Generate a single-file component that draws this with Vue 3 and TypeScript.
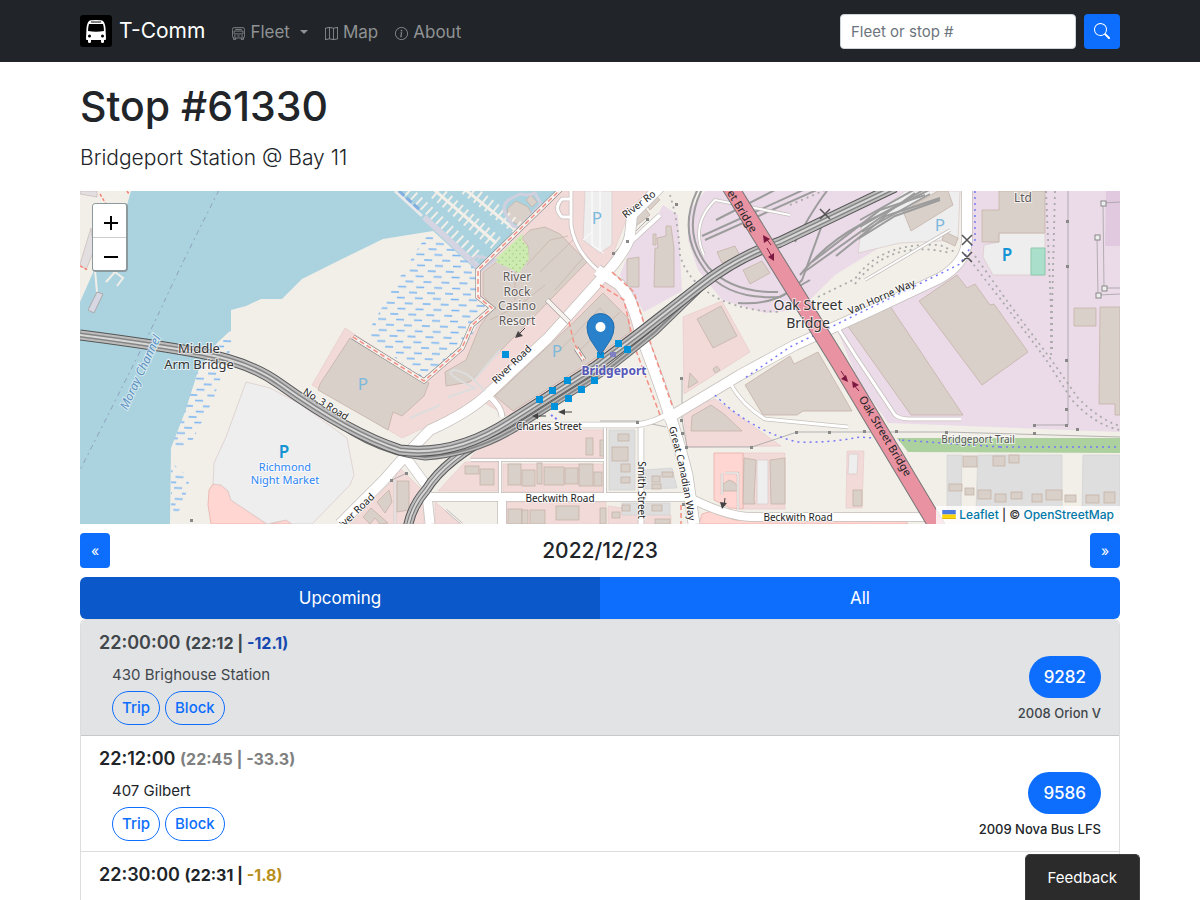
<script setup lang="ts">
import { ref } from 'vue'

interface Departure {
  time: string
  expected: string
  delay: string
  tone: 'early' | 'muted' | 'late'
  route: string
  vehicle?: string
  model?: string
  past?: boolean
}

const departures: Departure[] = [
  { time: '22:00:00', expected: '22:12', delay: '-12.1', tone: 'early', route: '430 Brighouse Station', vehicle: '9282', model: '2008 Orion V', past: true },
  { time: '22:12:00', expected: '22:45', delay: '-33.3', tone: 'muted', route: '407 Gilbert', vehicle: '9586', model: '2009 Nova Bus LFS' },
  { time: '22:30:00', expected: '22:31', delay: '-1.8', tone: 'late', route: '430 Brighouse Station' },
]

const query = ref('')
const view = ref<'upcoming' | 'all'>('upcoming')

// Map features, in map canvas units
const industrial = [
  '663,205 678,215 682,291 644,312 620,275 632,245 655,220',
  '705,191 905,191 900,235 835,275 800,310 765,313 722,300 698,270 688,240 690,210',
  '835,325 960,264 972,240 971,191 1120,191 1120,432 888,423 858,380',
]
const commercial = [
  '345,328 424,380 465,347 478,325 490,308 478,297 478,270 560,191 660,191 628,215 605,275 625,290 645,340 600,365 510,418 480,400 430,425 402,438 312,385',
  '470,458 497,430 603,430 603,458',
  '438,491 465,462 498,462 498,491',
  '503,464 603,464 603,492 503,492',
  '506,502 606,502 606,524 506,524',
  '435,502 462,524 435,524',
  '399,467 424,492 424,524 350,524 395,478',
  '683,317 722,301 750,352 684,394',
  '683,410 715,399 781,446 687,447',
  '743,453 785,453 785,509 743,509',
  '847,451 864,451 862,508 846,508',
  '608,506 671,515 671,524 608,524',
]
const retail = [
  '213,484 221,485 228,491 231,500 267,524 211,524 208,505 209,490',
  '714,453 743,453 743,509 730,508 714,500',
  '699,524 702,514 712,511 735,520 905,521 908,524',
  '270,524 286,520 292,524',
]
const paved = [
  '246,382 226,437 214,463 213,484 221,485 228,491 231,500 267,524 286,520 292,524 312,524 350,485 354,475 347,438 300,404 270,388',
  '585,191 612,191 612,245 600,253 583,240',
  '858,253 862,225 905,191 960,191 958,240 900,243',
  '999,242 999,233 1045,233 1045,275 993,275 983,257 984,245',
  '757,460 768,460 768,504 757,504',
  '849,454 858,454 857,474 848,474',
]
const residential = [
  '609,430 635,430 635,490 609,490',
  '645,470 672,468 677,488 645,489',
  '622,503 670,503 670,515 622,515',
  '947,455 962,455 961,510 947,510',
  '978,455 1062,455 1062,510 976,510',
  '1083,455 1120,455 1120,510 1082,510',
]
const buildings = [
  '483,272 498,261 519,272 529,259 528,246 522,238 530,230 545,227 560,234 587,262 516,335 470,382 446,386 445,372 466,360 480,326 493,308 483,295',
  '350,338 429,383 424,396 402,416 393,412 388,430 318,390 320,384',
  '495,396 578,318 603,293 628,318 630,332 590,362 513,411',
  '508,208 516,201 528,207 533,216 520,226 506,218',
  '526,200 531,195 537,202 532,207',
  '630,222 644,207 650,215 636,226',
  '647,205 655,195 660,200 650,210',
  '627,259 639,257 639,287 627,287',
  '655,248 658,248 657,238 666,236 666,226 671,226 674,248 674,287 654,287',
  '653,234 656,234 656,245 653,245',
  '717,252 735,246 740,256 722,263',
  '743,270 762,261 770,273 750,284',
  '697,319 721,306 737,336 713,348',
  '745,385 790,356 794,364 818,352 852,411 803,411 797,415 763,415',
  '692,416 711,405 724,414 742,431 691,431',
  '688,388 690,373 698,382',
  '713,369 717,366 720,370 715,373',
  '847,325 890,306 963,415 911,415',
  '919,301 957,275 967,288 975,284 990,305 994,304 1028,352 982,385',
  '999,191 1045,191 1045,233 999,233 999,242 982,242 982,210 999,210',
  '1074,308 1096,308 1096,326 1074,326',
  '1100,307 1120,307 1120,415 1115,415 1115,404 1099,404',
  '903,211 938,191 948,191 953,205 911,231',
  '942,240 945,232 958,238 955,246',
  '744,458 756,460 754,500 755,504 743,504',
  '770,460 785,458 785,504 771,504',
  '723,484 729,480 734,482 738,487 738,491 723,491',
  '397,481 409,481 409,510 397,512',
  '377,502 389,490 392,502 385,513',
  '363,517 371,508 388,523 380,524 375,518 370,524',
]
const houses = [
  [612, 447, 16, 14], [618, 434, 11, 7], [621, 464, 9, 8], [621, 477, 9, 6], [652, 476, 8, 6], [662, 472, 11, 5], [652, 484, 9, 5],
  [622, 505, 8, 6], [652, 505, 10, 6], [612, 512, 8, 6], [655, 519, 15, 5], [600, 440, 4, 16], [600, 508, 6, 16],
  [853, 490, 9, 16], [465, 466, 14, 8], [480, 469, 14, 16], [508, 464, 13, 21], [522, 470, 13, 16], [537, 463, 5, 21], [544, 467, 20, 18],
  [565, 468, 13, 16], [579, 464, 14, 22], [594, 472, 8, 14], [586, 438, 7, 17], [508, 509, 14, 15], [522, 510, 6, 14],
  [530, 510, 15, 14], [556, 506, 23, 14], [963, 456, 14, 11], [993, 456, 12, 10], [1009, 455, 10, 8], [949, 484, 13, 7], [965, 488, 9, 7],
  [978, 490, 13, 9], [995, 494, 11, 8], [1011, 492, 11, 7], [1032, 494, 10, 8], [1046, 490, 16, 10], [1065, 495, 11, 7], [1086, 495, 13, 8], [1104, 492, 11, 11],
]
const roads = [
  { d: 'M340 524L384 480Q410 450 430 430Q470 412 489 393L548 338L600 280Q628 250 630 235L632 215L662 185', w: 10 },
  { d: 'M597 270L620 285Q634 302 641 335L655 372Q676 430 687 475L694 524', w: 11 },
  { d: 'M665 420L740 375L795 345L870 311L940 278Q966 263 967 240V185', w: 10 },
  { d: 'M520 425H635Q655 423 670 412', w: 5 },
  { d: 'M424 497H688Q725 516 750 517H940', w: 8 },
  { d: 'M404 455L426 485L430 524', w: 9 },
  { d: 'M502 498V524', w: 8 },
  { d: 'M641 428V524', w: 5 },
  { d: 'M605 428V494M471 460H605M500 461V494', w: 2 },
  { d: 'M488 395Q502 407 502 417', w: 5 },
  { d: 'M622 250L660 215', w: 4 },
  { d: 'M571 191V225Q575 252 600 272M571 199H562Q553 208 562 217H571', w: 3 },
  { d: 'M730 383Q742 405 765 419L848 427', w: 3 },
  { d: 'M836 325L855 355L895 415Q900 419 910 419H961', w: 3 },
  { d: 'M395 480V524M446 510L462 524M725 473H738V510M722 473V495', w: 1 },
  { d: 'M704 255Q690 225 715 200L790 215M865 280L950 230', w: 2 },
]
const mainLine = 'M80 335Q150 344 200 353T280 384Q350 434 400 450Q455 457 510 421L595 367L640 333L700 286Q735 258 780 242L895 187'
const sideLine = 'M310 400Q365 451 425 457Q480 453 525 422L610 368L655 332Q685 303 715 274'
const branchLine = 'M500 431Q445 459 426 490Q412 506 408 526'
const sidings = [
  'M700 185Q675 230 705 270Q728 300 780 297L810 280',
  'M703 187Q680 232 709 268Q733 293 778 292',
  'M738 303Q780 306 802 280L822 225',
  'M716 220L775 190M702 236L812 186M705 240L830 184',
  'M795 242Q815 206 827 191M800 275Q826 243 860 225L935 187',
  'M804 272L915 193M812 262L880 210L925 195M836 256L886 216L940 198M858 239L895 216L940 200',
  'M860 220L919 187M860 227L925 189M862 232L930 194',
]
const footpaths = [
  'M670 195Q678 220 680 255Q685 275 705 290Q730 310 780 312',
  'M818 297L855 279Q880 242 940 245L955 252M855 284Q890 238 950 253',
  'M1046 191L1051 310V355M1055 191L1052 310V350',
  'M970 260L1005 305L1045 358L1072 400Q1095 425 1120 430M975 256L1010 305L1050 358L1078 398Q1100 420 1120 426',
  'M963 195V240M790 205L830 188',
]
const cycleStops = [[505, 354], [618, 343], [627, 349], [594, 380], [581, 389], [567, 380], [552, 390], [539, 399], [568, 398], [554, 406]]
const poles = [[648, 219], [628, 241], [614, 253], [677, 204], [682, 378], [682, 420], [683, 433], [687, 447], [752, 447], [797, 432], [830, 432], [865, 431], [897, 431], [947, 432], [1035, 425], [1035, 433], [1067, 360], [1067, 409], [1067, 425], [1078, 429], [392, 480], [407, 473], [638, 422], [1068, 221], [1068, 266], [192, 520], [684, 504]]
const towers = [[1103, 203], [1097, 237], [1104, 288], [1098, 295]]
</script>

<template>
  <header class="navbar">
    <a class="brand" href="#">
      <svg class="logo" viewBox="0 0 32 32" aria-hidden="true">
        <rect width="32" height="32" rx="3" fill="#000" />
        <path fill="#fff" d="M9 6Q10 5 16 5T23 6Q25 8 25.500 13L26 24Q26 25 25 25H24V27Q24 28 22.500 28T21 27V25H11V27Q11 28 9.500 28T8 27V25H7Q6 25 6 24L6.500 13Q7 8 9 6Z" />
        <path fill="#000" d="M11 6.500H21V7.500H11ZM9 9H23Q24 12 24 16Q16 17.500 8 16Q8 12 9 9Z" />
        <circle cx="9.500" cy="21" r="1.500" /><circle cx="22.500" cy="21" r="1.500" />
      </svg>
      T-Comm
    </a>
    <nav class="links">
      <a class="fleet" href="#">
        <svg class="icon" viewBox="0 0 16 16" aria-hidden="true">
          <path d="M2.500 .8H13.500Q15.500 .8 15.500 3V11.500Q15.500 13.500 13.500 13.500H2.500Q.5 13.500 .5 11.500V3Q.5 .8 2.500 .8ZM4 3H12M2.500 5H13.500V8.500H2.500ZM6.500 11H9.500M2 13V15.500H4.500V13.500M11.500 13.500V15.500H14V13" fill="none" stroke="currentColor" />
          <circle cx="3.500" cy="11" r="1" /><circle cx="12.500" cy="11" r="1" />
        </svg>
        Fleet
      </a>
      <a href="#">
        <svg class="icon" viewBox="0 0 16 16" aria-hidden="true">
          <path fill-rule="evenodd" d="M15.817.113A.5.5 0 0 1 16 .5v14a.5.5 0 0 1-.402.49l-5 1a.502.502 0 0 1-.196 0L5.500 15.010l-4.902.98A.5.5 0 0 1 0 15.500v-14a.5.5 0 0 1 .402-.49l5-1a.5.5 0 0 1 .196 0L10.500.99l4.902-.98a.5.5 0 0 1 .415.103zM10 1.910l-4-.8v12.980l4 .8V1.910zm1 12.980 4-.8V1.110l-4 .8v12.980zm-6-.8V1.110l-4 .8v12.980l4-.8z" />
        </svg>
        Map
      </a>
      <a href="#">
        <svg class="icon" viewBox="0 0 16 16" aria-hidden="true">
          <path d="M8 15A7 7 0 1 1 8 1a7 7 0 0 1 0 14zm0 1A8 8 0 1 0 8 0a8 8 0 0 0 0 16z" />
          <path d="m8.930 6.588-2.290.287-.082.380.450.083c.294.070.352.176.288.469l-.738 3.468c-.194.897.105 1.319.808 1.319.545 0 1.178-.252 1.465-.598l.088-.416c-.2.176-.492.246-.686.246-.275 0-.375-.193-.304-.533L8.930 6.588zM9 4.500a1 1 0 1 1-2 0 1 1 0 0 1 2 0z" />
        </svg>
        About
      </a>
    </nav>
    <form class="search" @submit.prevent>
      <input v-model="query" type="search" placeholder="Fleet or stop #" aria-label="Fleet or stop #" />
      <button type="submit" aria-label="Search">
        <svg viewBox="0 0 16 16" aria-hidden="true">
          <path d="M11.742 10.344a6.500 6.500 0 1 0-1.397 1.398h-.001c.030.040.062.078.098.115l3.850 3.850a1 1 0 0 0 1.415-1.414l-3.850-3.850a1.007 1.007 0 0 0-.115-.1zM12 6.500a5.500 5.500 0 1 1-11 0 5.500 5.500 0 0 1 11 0z" />
        </svg>
      </button>
    </form>
  </header>

  <main>
    <h1>Stop #61330</h1>
    <p class="lead">Bridgeport Station @ Bay 11</p>

    <section class="map" aria-label="Stop map">
      <svg class="canvas" viewBox="80 191 1040 333" preserveAspectRatio="xMidYMid slice">
        <defs>
          <pattern id="marsh" width="18" height="22" patternUnits="userSpaceOnUse" patternTransform="rotate(2)">
            <path d="M1 3H9M12 8.500H18M0 8.500H2M5 14H13M11 19.500H18M0 19.500H1" stroke="#78b4f2" stroke-width="1.700" fill="none" />
          </pattern>
          <pattern id="grass" width="7" height="7" patternUnits="userSpaceOnUse">
            <rect width="7" height="7" fill="#cdebb0" /><circle cx="2" cy="2" r=".7" fill="#95c477" /><circle cx="5.500" cy="5.500" r=".7" fill="#95c477" />
          </pattern>
          <path id="gcw" d="M668 425Q681 468 689 524" />
        </defs>
        <rect x="80" y="191" width="1040" height="333" fill="#f2efe9" />
        <path fill="#aad3df" d="M131 191H566L478 272L433 231L383 239L340 260L302 279L282 299H261L246 306L231 310V330L217 343L198 371L185 412L171 448L170 524H80V302L95 268L110 250L127 205Z" />
        <path fill="url(#marsh)" d="M431 232L483 272V296L493 308L470 350L424 380L366 335L395 285L420 245ZM231 330V348L213 400L190 445L171 447L185 411L198 371L217 343ZM171 462L190 478L183 505L171 522Z" />

        <g fill="#ebdbe8"><polygon v-for="p in industrial" :key="p" :points="p" /></g>
        <g fill="#f2dad9" stroke="#e6c8c6" stroke-width=".6"><polygon v-for="p in commercial" :key="p" :points="p" /></g>
        <g fill="#ffd6d1" stroke="#e6aaa4" stroke-width=".7"><polygon v-for="p in retail" :key="p" :points="p" /></g>
        <g fill="#eee" stroke="#d8c8c8" stroke-width=".7"><polygon v-for="p in paved" :key="p" :points="p" /></g>
        <g fill="#dedede" stroke="#ccc" stroke-width=".6"><polygon v-for="p in residential" :key="p" :points="p" /></g>
        <path fill="#add19e" d="M897 438H1120V453L908 452Z" />
        <path fill="#aae0cb" stroke="#8ec7ae" d="M1031 248H1045V275H1031Z" />
        <path fill="#e1c9df" d="M1106 191H1120V246H1105Z" />
        <g fill="#d9d0c9" stroke="#c5b3a8" stroke-width=".8">
          <polygon v-for="p in buildings" :key="p" :points="p" />
          <rect v-for="(h, i) in houses" :key="i" :x="h[0]" :y="h[1]" :width="h[2]" :height="h[3]" />
        </g>
        <path fill="none" stroke="#c5b3a8" stroke-width=".7" d="M527 265L550 240L568 236M540 272L575 238M555 290L583 258M490 320L520 305L545 285M560 350L600 308L615 325M580 350L620 312M515 272V300" />
        <path fill="url(#grass)" d="M493 261L523 233L522 240L528 247L529 259L519 273L505 266Z" />

        <!-- marina -->
        <g fill="none" stroke="#f2efe9">
          <path d="M432 188L496 243M462 187L518 232" stroke-width="3" />
          <path d="M436 192L496 243" stroke-width="15" stroke-dasharray="2 5" />
          <path d="M466 188L518 228" stroke-width="14" stroke-dasharray="2 5" />
          <path d="M408 191L480 258" stroke-width="10" stroke-dasharray="2 5" />
        </g>
        <path d="M424 217L478 267" fill="none" stroke="#d4d4e2" stroke-width="6" />
        <path d="M395 191L422 216" fill="none" stroke="#e9e8ea" stroke-width="3" />
        <path d="M399 191L421 211" fill="none" stroke="#82aee0" stroke-width="3" stroke-dasharray="7 3" />
        <path d="M471 260L477 256L495 260L478 272ZM513 226L506 215Q500 204 512 198L520 194L528 195L535 193L541 204L520 228Z" fill="none" stroke="#d0d0df" stroke-width="3" />
        <path d="M95 270L97 292M106 282L115 272L123 278L117 286M112 270L115 273" fill="none" stroke="#f2efe9" stroke-width="2" />
        <path d="M97 292L103 294L94 313L88 310Z" fill="#d8d8e4" stroke="#aaa" />
        <path d="M80 191H97V197L80 194ZM91 228L80 264L86 270L94 250Z" fill="#e3dfe0" stroke="#c5b8b8" stroke-width=".7" />
        <path d="M100 194L106 204M127 191L129 194M80 266L88 270" stroke="#fa8072" stroke-width="1.500" stroke-dasharray="3 2" fill="none" />
        <path d="M219 190Q180 267 165 300T80 470" fill="none" stroke="#8f9fbd" stroke-width="1" stroke-dasharray="5 4 2 4" />

        <!-- rail yard and service lines -->
        <g fill="none" stroke="#9c9c9c" stroke-width="2"><path v-for="s in sidings" :key="s" :d="s" /></g>
        <g fill="none" stroke="#aaa" stroke-width="1.800" stroke-dasharray="2 4"><path v-for="f in footpaths" :key="f" :d="f" /></g>
        <path d="M1068 191V425H1035M1103 203L1104 288H1120M1097 237L1098 295L1120 294M1103 203L1120 202M682 378V420L687 447H752L797 432H897L947 432L1120 437M600 421H638L666 427M392 480L407 473M614 253L648 219" fill="none" stroke="#999" stroke-width=".7" />

        <!-- streets -->
        <g fill="none" stroke="#c6c0bd" stroke-linejoin="round"><path v-for="r in roads" :key="r.d" :d="r.d" :stroke-width="r.w + 1.5" /></g>
        <g fill="none" stroke="#fff" stroke-linejoin="round"><path v-for="r in roads" :key="r.d" :d="r.d" :stroke-width="r.w" /></g>
        <path d="M592 191V245L604 253M600 191V250M583 240L592 232" fill="none" stroke="#fff" stroke-width="1" />
        <path d="M448 397L475 388Q440 372 455 370Q465 372 474 380L485 391M474 380L500 350M410 418L440 405" fill="none" stroke="#ddd" stroke-width="2" />
        <g fill="none" stroke="#777" stroke-width="5"><path d="M353 337L424 381L462 348L472 325L492 308L478 297V270L562 188" /><path d="M547 300L569 322" /><path d="M576 348L584 360" /></g>
        <g fill="none" stroke="#f8f2ef" stroke-width="4"><path d="M353 337L424 381L462 348L472 325L492 308L478 297V270L562 188" /><path d="M547 300L569 322" /><path d="M576 348L584 360" /></g>
        <g fill="none" stroke="#f58f83" stroke-width="1.500" stroke-dasharray="5 3">
          <path d="M353 337L424 381L462 348L472 325L492 308L478 297V270L562 188M569 322L574 343L584 360M612 272L634 292L646 330L672 405M600 285L624 300L634 345L660 415M681 505V524" />
        </g>
        <path d="M1000 447L900 440M715 395Q750 430 797 442Q830 443 860 437L900 440M1000 447H1120M975 191V240L960 264L790 347L745 378" fill="none" stroke="#7777f8" stroke-width="1.500" stroke-dasharray="2 4" />

        <!-- elevated railway -->
        <g fill="none">
          <path :d="branchLine" stroke="#555" stroke-width="10" /><path :d="branchLine" stroke="#bdbdbd" stroke-width="8" /><path :d="branchLine" stroke="#777" stroke-width="4" /><path :d="branchLine" stroke="#d5d5d5" stroke-width="2" />
          <path :d="sideLine" stroke="#666" stroke-width="7" /><path :d="sideLine" stroke="#bbb" stroke-width="5" /><path :d="sideLine" stroke="#888" stroke-width="2" />
          <path :d="mainLine" stroke="#555" stroke-width="11" /><path :d="mainLine" stroke="#bdbdbd" stroke-width="9" /><path :d="mainLine" stroke="#858585" stroke-width="5" /><path :d="mainLine" stroke="#d8d8d8" stroke-width="2" />
        </g>
        <path d="M729 185L838 361L938 528" fill="none" stroke="#777" stroke-width="17" />
        <path d="M729 185L838 361L938 528" fill="none" stroke="#e892a2" stroke-width="15" />
        <g stroke="#7d1840" fill="#7d1840"><path d="M771 245L765 237M767 248L772 257M841 371L847 380M859 391L853 384" /><path stroke="none" d="M763 235L770 239L764 243ZM774 261L768 257L774 253ZM848 382L841 379L846 375ZM852 381L859 385L853 388Z" /></g>
        <g stroke="#444" fill="#444"><path d="M525 328L518 335M546 416H534M572 412H560M725 498L724 506" /><path stroke="none" d="M515 338L518 331L523 336ZM532 416L538 413V419ZM558 412L565 409V415ZM722 509L720 502L727 503Z" /></g>
        <path d="M820 209L830 219M830 209L820 219M962 235L972 245M972 235L962 245M962 252L972 262M972 252L962 262" stroke="#555" stroke-width="1.500" />
        <path d="M551 415L558 420" stroke="#7777f8" stroke-width="2" stroke-dasharray="2 3" />
        <g fill="#888"><rect v-for="(p, i) in poles" :key="i" :x="p[0] - 2" :y="p[1] - 1" width="3" height="3" /></g>
        <g fill="#eee" stroke="#888"><rect v-for="(p, i) in towers" :key="i" :x="p[0] - 2" :y="p[1] - 2" width="5" height="5" /></g>
        <g fill="#0092da"><rect v-for="(s, i) in cycleStops" :key="i" :x="s[0] - 3" :y="s[1] - 3" width="7" height="7" /><path d="M597 352H604V358H597Z" /></g>
        <path d="M610 352H616V357H610Z" fill="#7f7fc4" />

        <g class="parking"><text x="284" y="458" class="strong">P</text><text x="363" y="390">P</text><text x="557" y="357">P</text><text x="597" y="224">P</text><text x="940" y="231">P</text><text x="1007" y="261" class="strong">P</text></g>
        <g class="place">
          <text x="199" y="353">Middle</text><text x="199" y="369">Arm Bridge</text>
        </g>
        <g class="place large"><text x="808" y="310">Oak Street</text><text x="808" y="328">Bridge</text></g>
        <g class="place soft"><text x="517" y="281">River</text><text x="517" y="296">Rock</text><text x="517" y="310">Casino</text><text x="517" y="325">Resort</text><text x="1023" y="202">Ltd</text></g>
        <g class="place market"><text x="285" y="471">Richmond</text><text x="285" y="484">Night Market</text></g>
        <text class="place station" x="614" y="375">Bridgeport</text>
        <g class="street">
          <text transform="translate(324 407) rotate(32)">No. 3 Road</text>
          <text transform="translate(514 367) rotate(-44)">River Road</text>
          <text transform="translate(357 515) rotate(-44)">River Road</text>
          <text transform="translate(641 207) rotate(-37)">River Ro</text>
          <text x="549" y="430">Charles Street</text><text x="560" y="502">Beckwith Road</text><text x="798" y="521">Beckwith Road</text>
          <text transform="translate(638 490) rotate(90)">Smith Street</text>
          <text><textPath href="#gcw" startOffset="50%">Great Canadian Way</textPath></text>
          <text transform="translate(883 300) rotate(-24)">Van Horne Way</text>
          <text x="978" y="443" class="trail">Bridgeport Trail</text>
          <text class="trunk" transform="translate(882 438) rotate(59)">Oak Street Bridge</text>
          <text class="trunk" transform="translate(739 213) rotate(59)">et Bridge</text>
        </g>
        <text class="river" transform="translate(144 374) rotate(-65)">Moray Channel</text>

        <!-- stop marker -->
        <path d="M600.500 355L590 339Q587 333 587 327A13.500 13.500 0 0 1 614 327Q614 333 611 339Z" fill="#2a81cb" stroke="#1f6bac" />
        <circle cx="600.500" cy="327" r="5" fill="#fff" />
      </svg>

      <div class="zoom">
        <button type="button" aria-label="Zoom in"><svg viewBox="0 0 16 16"><path d="M1 8H15M8 1V15" /></svg></button>
        <button type="button" aria-label="Zoom out"><svg viewBox="0 0 16 16"><path d="M1 8H15" /></svg></button>
      </div>
      <div class="credit">
        <a href="#"><svg class="flag" viewBox="0 0 12 8" aria-hidden="true"><path fill="#4C7BE1" d="M0 0h12v4H0z" /><path fill="#FFD500" d="M0 4h12v3H0z" /><path fill="#E0BC00" d="M0 7h12v1H0z" /></svg> Leaflet</a> | © <a href="#">OpenStreetMap</a>
      </div>
    </section>

    <div class="day">
      <button type="button" aria-label="Previous day">«</button>
      <h2>2022/12/23</h2>
      <button type="button" aria-label="Next day">»</button>
    </div>

    <div class="tabs" role="group">
      <button type="button" :class="{ active: view === 'upcoming' }" @click="view = 'upcoming'">Upcoming</button>
      <button type="button" :class="{ active: view === 'all' }" @click="view = 'all'">All</button>
    </div>

    <ul class="list">
      <li v-for="d in departures" :key="d.time" :class="{ past: d.past }">
        <div>
          <h3 :class="d.tone">{{ d.time }} <small>({{ d.expected }} | <span>{{ d.delay }})</span></small></h3>
          <div class="detail">
            <p>{{ d.route }}</p>
            <div class="actions">
              <a href="#">Trip</a>
              <a href="#">Block</a>
            </div>
          </div>
        </div>
        <div v-if="d.vehicle" class="bus">
          <a href="#">{{ d.vehicle }}</a>
          <small>{{ d.model }}</small>
        </div>
      </li>
    </ul>
  </main>

  <button class="feedback" type="button">Feedback</button>
</template>

<style>
body {
  margin: 0;
  background: #fff;
}
</style>

<style scoped>
.navbar,
main,
.feedback {
  font-family: Inter, "Liberation Sans", sans-serif;
  font-size: 15px;
  line-height: 22px;
  color: #212529;
}
.navbar,
.navbar *,
main * {
  box-sizing: border-box;
}
button,
input {
  font: inherit;
}
button {
  cursor: pointer;
}
a {
  text-decoration: none;
}
.navbar {
  display: flex;
  align-items: center;
  height: 62px;
  padding: 0 80px;
  background: #212529;
}
.brand {
  display: flex;
  align-items: center;
  gap: 7px;
  color: #fff;
  font-size: 21px;
  line-height: 32px;
}
.logo {
  width: 32px;
  height: 32px;
}
.links {
  display: flex;
  gap: 17px;
  margin-left: 27px;
  padding-top: 2px;
}
.links a {
  display: flex;
  align-items: center;
  gap: 5px;
  color: #909294;
  font-size: 17px;
  line-height: 24px;
}
.icon {
  width: 13px;
  height: 13px;
  margin-top: 2px;
  fill: currentColor;
}
.fleet::after {
  content: "";
  margin-left: 5px;
  border: 4px solid transparent;
  border-top-color: currentColor;
  border-bottom: 0;
}
.search {
  display: flex;
  gap: 8px;
  margin-left: auto;
}
.search input {
  width: 236px;
  height: 35px;
  padding: 0 10px;
  border: 1px solid #ced4da;
  border-radius: 4px;
  outline: 0;
  background: #fff;
}
.search input::placeholder {
  color: #6c757d;
  opacity: 1;
}
.search button {
  display: grid;
  place-items: center;
  width: 36px;
  height: 35px;
  padding: 0;
  border: 0;
  border-radius: 4px;
  background: #0d6efd;
}
.search svg {
  width: 16px;
  height: 16px;
  fill: #fff;
}
main {
  padding: 18px 80px 0;
}
h1 {
  margin: 0;
  font-size: 41px;
  font-weight: 500;
  line-height: 52px;
}
.lead {
  margin: 10px 0 18px;
  font-size: 21px;
  font-weight: 300;
  line-height: 31px;
}
.map {
  position: relative;
  height: 333px;
  overflow: hidden;
}
.canvas {
  display: block;
  width: 100%;
  height: 100%;
}
.canvas text {
  font-family: "Noto Sans", "Open Sans", sans-serif;
  text-anchor: middle;
}
.place {
  fill: #333;
  font-size: 13px;
  stroke: #ffffffaa;
  stroke-width: 2px;
  paint-order: stroke;
}
.place.large {
  font-size: 14px;
}
.place.soft {
  fill: #5f5a5a;
  font-size: 12px;
}
.place.market {
  fill: #2f86f6;
  font-size: 11px;
}
.place.station {
  fill: #5558b8;
  font-size: 12px;
  font-weight: 700;
}
.street {
  fill: #222;
  font-size: 10px;
  stroke: #ffffffaa;
  stroke-width: 2px;
  paint-order: stroke;
}
.trail {
  fill: #555;
}
.trunk {
  stroke: none;
  font-size: 11px;
}
.river {
  fill: #5c91c2;
  font-size: 12px;
  font-style: italic;
  stroke: #d5e9ef;
  stroke-width: 2px;
  paint-order: stroke;
}
.parking {
  fill: #7db9dc;
  font-size: 17px;
}
.parking .strong {
  fill: #1594d5;
  font-weight: 600;
}
.zoom {
  position: absolute;
  top: 12px;
  left: 12px;
  display: grid;
  overflow: hidden;
  border: 1px solid #8c999d;
  border-width: 1px 2px 2px 1px;
  border-radius: 4px;
}
.zoom button {
  display: grid;
  place-items: center;
  width: 33px;
  height: 33px;
  padding: 5px 0 0 2px;
  border: 0;
  background: #fff;
}
.zoom button + button {
  border-top: 1px solid #ccc;
}
.zoom svg {
  width: 16px;
  height: 16px;
  fill: none;
  stroke: #000;
  stroke-width: 2px;
}
.credit {
  position: absolute;
  right: 0;
  bottom: 0;
  padding: 0 6px;
  background: #ffffffcc;
  color: #333;
  font-size: 12px;
  font-weight: 500;
  line-height: 18px;
}
.credit a {
  color: #0078a8;
}
.flag {
  width: 14px;
  height: 9px;
}
.day {
  display: flex;
  align-items: center;
  justify-content: space-between;
  margin: 9px 0;
}
.day button {
  width: 30px;
  height: 35px;
  padding: 0;
  border: 0;
  border-radius: 4px;
  background: #0d6efd;
  color: #fff;
  font-size: 14px;
}
.day h2 {
  margin: 0;
  font-size: 21px;
  font-weight: 500;
}
.tabs {
  display: flex;
  overflow: hidden;
  border-radius: 6px;
}
.tabs button {
  flex: 1;
  height: 42px;
  border: 0;
  background: #0d6efd;
  color: #fff;
  font-size: 17px;
}
.tabs .active {
  background: #0a58ca;
}
.list {
  margin: 0;
  padding: 0;
  list-style: none;
  border: 1px solid #dcddde;
  border-bottom: 0;
  border-radius: 6px 6px 0 0;
}
.list li {
  display: flex;
  justify-content: space-between;
  padding: 11px 18px 10px;
  border-bottom: 1px solid #dcddde;
}
.list .past {
  border-radius: 5px 5px 0 0;
  border-color: #c6c8ca;
  background: #e2e3e5;
  color: #41464b;
}
h3 {
  margin: 0;
  font-size: 18px;
  font-weight: 600;
  line-height: 24px;
}
h3 small {
  font-size: 16px;
  font-weight: 700;
}
.early span {
  color: #1548b0;
}
.muted small {
  color: #808080;
}
.late span {
  color: #b8901c;
}
.detail {
  padding: 9px 0 0 13px;
}
.detail p {
  margin: 0 0 5px;
}
.actions {
  display: flex;
  gap: 5px;
}
.actions a {
  padding: 5px 9px;
  border: 1px solid #0d6efd;
  border-radius: 17px;
  color: #0d6efd;
  font-weight: 500;
}
.bus {
  display: flex;
  flex-direction: column;
  align-items: flex-end;
  justify-content: flex-end;
  gap: 3px;
}
.bus a {
  padding: 9px 15px;
  border-radius: 21px;
  background: #0d6efd;
  color: #fff;
  font-size: 17px;
  font-weight: 500;
  line-height: 24px;
}
.bus small {
  font-size: 13px;
  font-weight: 500;
  line-height: 24px;
}
.feedback {
  position: fixed;
  right: 60px;
  bottom: 0;
  height: 46px;
  padding: 0 22px;
  border: 1px solid #3d3d3d;
  border-bottom: 0;
  border-radius: 5px 5px 0 0;
  background: #2b2b2b;
  color: #fff;
}
</style>
